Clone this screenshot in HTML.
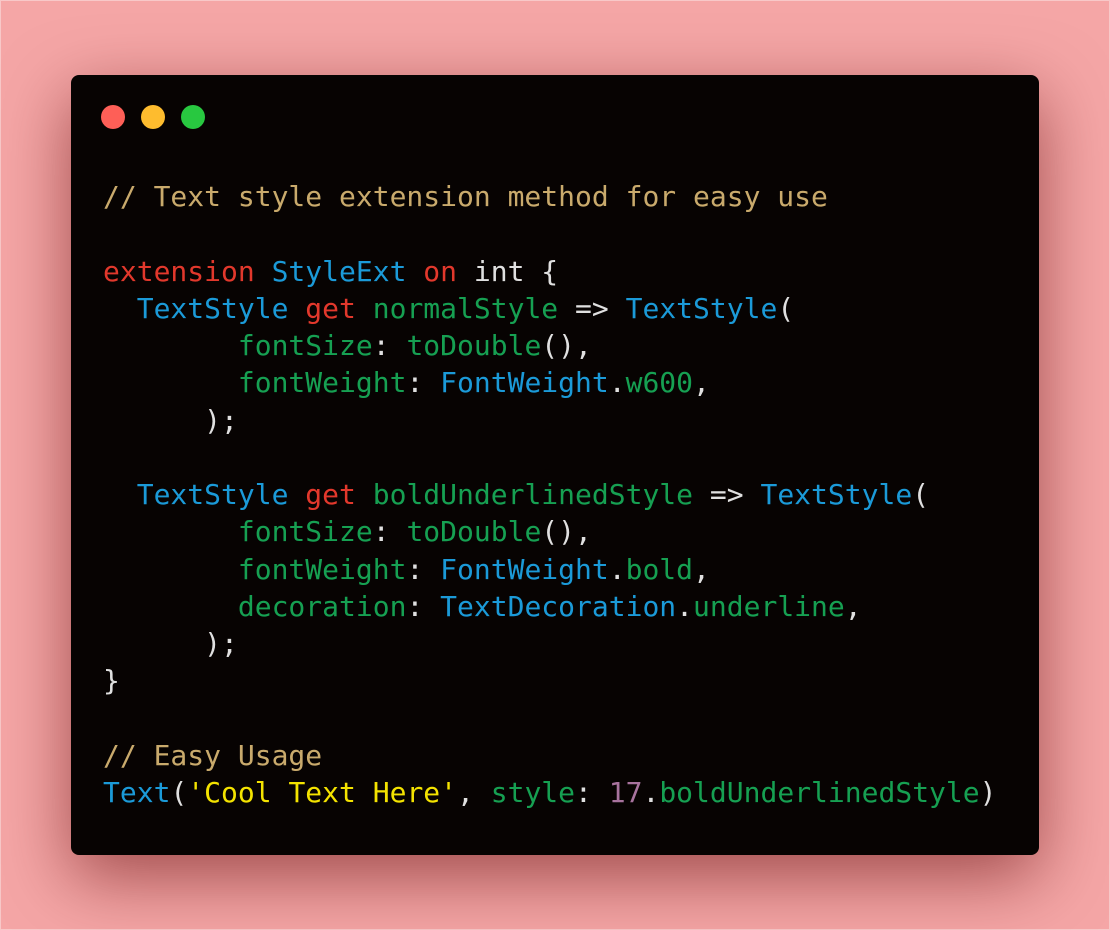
<!DOCTYPE html>
<html><head><style>
html,body{margin:0;padding:0}
body{width:1110px;height:930px;background:#f5a6a6;position:relative;overflow:hidden}
.edge{position:absolute;left:0;top:0;width:1108px;height:928px;border:1px solid #f8c8c8}
.win{position:absolute;left:71px;top:75px;width:968px;height:780px;background:#070302;border-radius:8px;box-shadow:0 22px 70px rgba(90,0,0,0.55)}
.d{position:absolute;top:30px;width:24px;height:24px;border-radius:50%}
pre{position:absolute;left:32px;top:103px;margin:0;font-family:"DejaVu Sans Mono","Liberation Mono",monospace;font-size:28px;line-height:37.25px;color:#e0e0e0}
.c{color:#c9aa6c}.r{color:#e2382c}.b{color:#1b9ad8}.g{color:#16a052}.y{color:#f4e300}.p{color:#a8739e}
</style></head><body>
<div class="edge"></div>
<div class="win">
<div class="d" style="left:30px;background:#fe5f57"></div>
<div class="d" style="left:70px;background:#febc2e"></div>
<div class="d" style="left:110px;background:#28c840"></div>
<pre><span class="c">// Text style extension method for easy use</span>

<span class="r">extension</span> <span class="b">StyleExt</span> <span class="r">on</span> int {
  <span class="b">TextStyle</span> <span class="r">get</span> <span class="g">normalStyle</span> =&gt; <span class="b">TextStyle</span>(
        <span class="g">fontSize</span>: <span class="g">toDouble</span>(),
        <span class="g">fontWeight</span>: <span class="b">FontWeight</span>.<span class="g">w600</span>,
      );

  <span class="b">TextStyle</span> <span class="r">get</span> <span class="g">boldUnderlinedStyle</span> =&gt; <span class="b">TextStyle</span>(
        <span class="g">fontSize</span>: <span class="g">toDouble</span>(),
        <span class="g">fontWeight</span>: <span class="b">FontWeight</span>.<span class="g">bold</span>,
        <span class="g">decoration</span>: <span class="b">TextDecoration</span>.<span class="g">underline</span>,
      );
}

<span class="c">// Easy Usage</span>
<span class="b">Text</span>(<span class="y">'Cool Text Here'</span>, <span class="g">style</span>: <span class="p">17</span>.<span class="g">boldUnderlinedStyle</span>)</pre>
</div>
</body></html>
